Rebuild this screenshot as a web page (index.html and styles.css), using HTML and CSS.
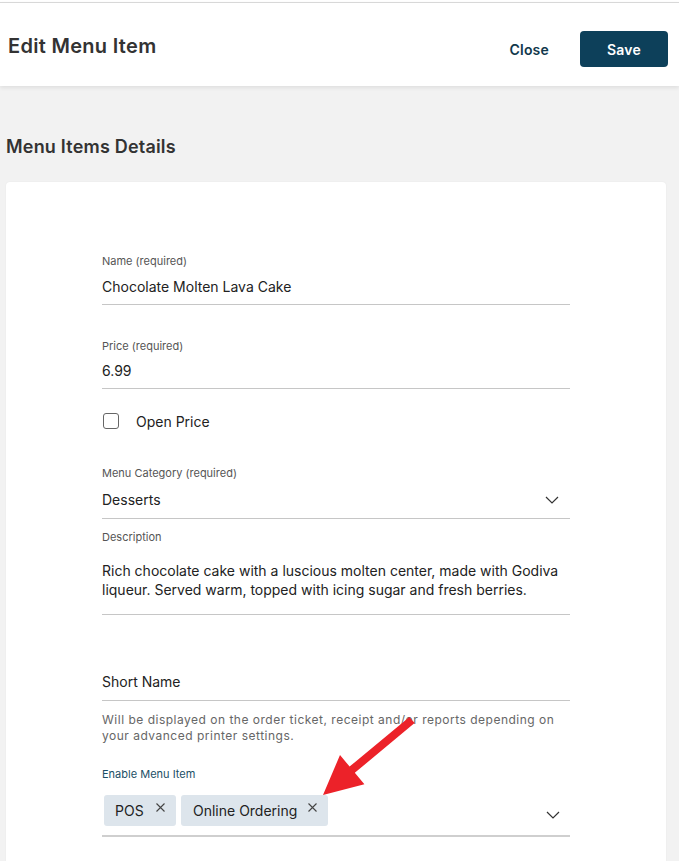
FILE: index.html
```html
<!DOCTYPE html>
<html lang="en">
<head>
<meta charset="utf-8">
<title>Edit Menu Item</title>
<link rel="stylesheet" href="styles.css">
</head>
<body>
<div class="page">
  <div class="topstrip"></div>
  <header class="header">
    <h1 class="title">Edit Menu Item</h1>
    <div class="actions">
      <button class="btn-close">Close</button>
      <button class="btn-save">Save</button>
    </div>
  </header>
  <main class="main">
    <h2 class="section-title">Menu Items Details</h2>
    <section class="card">
      <div class="form">
        <div class="field f-name">
          <div class="label">Name (required)</div>
          <div class="value">Chocolate Molten Lava Cake</div>
        </div>
        <div class="field f-price">
          <div class="label">Price (required)</div>
          <div class="value">6.99</div>
        </div>
        <label class="check-row">
          <span class="checkbox"></span>
          <span class="check-text">Open Price</span>
        </label>
        <div class="field f-category">
          <div class="label">Menu Category (required)</div>
          <div class="value select">
            <span>Desserts</span>
            <svg class="chev" width="14" height="8" viewBox="0 0 14 8"><path d="M1 1 L7 7 L13 1" fill="none" stroke="#333" stroke-width="1.2"/></svg>
          </div>
        </div>
        <div class="field f-desc">
          <div class="label">Description</div>
          <div class="value multi">Rich chocolate cake with a luscious molten center, made with Godiva liqueur. Served warm, topped with icing sugar and fresh berries.</div>
        </div>
        <div class="field f-short">
          <div class="value">Short Name</div>
        </div>
        <p class="helper">Will be displayed on the order ticket, receipt and/or reports depending on your advanced printer settings.</p>
        <div class="enable-label">Enable Menu Item</div>
        <div class="chips-field">
          <div class="chips">
            <span class="chip chip-pos">POS<svg class="x" width="9" height="9" viewBox="0 0 9 9"><path d="M0.5 0.5 L8.5 8.5 M8.5 0.5 L0.5 8.5" stroke="#444" stroke-width="1.1"/></svg></span>
            <span class="chip chip-oo">Online Ordering<svg class="x" width="9" height="9" viewBox="0 0 9 9"><path d="M0.5 0.5 L8.5 8.5 M8.5 0.5 L0.5 8.5" stroke="#444" stroke-width="1.1"/></svg></span>
          </div>
          <svg class="chev chev2" width="14" height="8" viewBox="0 0 14 8"><path d="M1 1 L7 7 L13 1" fill="none" stroke="#333" stroke-width="1.2"/></svg>
        </div>
      </div>
    </section>
  </main>
  <svg class="arrow" width="679" height="861" viewBox="0 0 679 861">
    <polygon points="323,795 340,755 349.6,766.6 409.4,716.9 414.6,723.1 354.8,772.8 364.4,784.3" fill="#ec2229"/>
  </svg>
</div>
</body>
</html>
```

FILE: styles.css
```css
html, body {
  margin: 0;
  padding: 0;
}
body {
  background: #f2f2f2;
  font-family: Inter, "Open Sans", "Liberation Sans", sans-serif;
  color: #222;
  overflow: hidden;
}
.page {
  position: relative;
  width: 679px;
  height: 861px;
  overflow: hidden;
}
.topstrip {
  height: 2px;
  background: #fff;
}
.header {
  height: 83px;
  background: #fff;
  border-top: 1px solid #d8d8d8;
  box-shadow: 0 2px 4px rgba(0,0,0,0.08);
  display: flex;
  align-items: flex-start;
  justify-content: space-between;
  padding: 0 11px 0 8px;
  position: relative;
  z-index: 1;
}
.title {
  margin: 32px 0 0;
  font-size: 20px;
  line-height: 22px;
  font-weight: 600;
  letter-spacing: 0.3px;
  color: #333;
}
.actions {
  display: flex;
  align-items: center;
  gap: 31px;
  margin-top: 28px;
}
.btn-close {
  background: none;
  border: 0;
  padding: 0;
  font-family: inherit;
  font-size: 14px;
  font-weight: 600;
  letter-spacing: 0.2px;
  color: #11384c;
}
.btn-save {
  width: 88px;
  height: 36px;
  background: #0d405a;
  border: 0;
  border-radius: 4px;
  color: #fff;
  font-family: inherit;
  font-size: 14px;
  font-weight: 600;
  letter-spacing: 0.2px;
}
.main {
  padding: 0 13px 0 6px;
}
.section-title {
  margin: 0;
  padding-top: 50px;
  height: 46px;
  font-size: 18px;
  font-weight: 600;
  letter-spacing: 0.2px;
  color: #333;
  line-height: 22px;
}
.card {
  margin-top: 0;
  background: #fff;
  border-radius: 4px;
  box-shadow: 0 0 2px rgba(0,0,0,0.06);
  height: 700px;
}
.form {
  width: 468px;
  padding: 72px 0 0 96px;
}
.field {
  border-bottom: 1px solid #c6c6c6;
}
.label {
  font-size: 11px;
  line-height: 14px;
  color: #555;
}
.value {
  font-size: 14px;
  line-height: 20px;
  color: #222;
}
.f-name .value { margin-top: 9px; padding-bottom: 7px; }
.f-price { margin-top: 34px; }
.f-price .value { margin-top: 8px; padding-bottom: 7px; }
.check-row {
  display: flex;
  align-items: center;
  gap: 17px;
  margin-top: 24px;
  height: 16px;
}
.checkbox {
  width: 14px;
  height: 14px;
  border: 1px solid #666;
  border-radius: 3px;
  margin-left: 1px;
}
.check-text {
  font-size: 14px;
  color: #222;
}
.f-category { margin-top: 37px; }
.f-category .value { margin-top: 10px; padding-bottom: 8px; }
.select {
  display: flex;
  align-items: center;
  justify-content: space-between;
  padding-right: 11px;
}
.chev { display: block; }
.f-desc { margin-top: 11px; }
.f-desc .value.multi {
  margin-top: 17px;
  line-height: 19px;
  padding-bottom: 15px;
}
.f-short { margin-top: 57px; }
.f-short .value { padding-bottom: 8px; }
.helper {
  margin: 11px 0 0;
  font-size: 12px;
  line-height: 16px;
  color: #666;
  letter-spacing: 0.5px;
}
.enable-label {
  margin-top: 23px;
  font-size: 11px;
  line-height: 14px;
  color: #1b4f66;
}
.chips-field {
  margin-top: 14px;
  padding: 0 10px 9px 2px;
  border-bottom: 2px solid #cfcfcf;
  display: flex;
  align-items: flex-end;
  justify-content: space-between;
}
.chips {
  display: flex;
  gap: 5px;
}
.chip {
  height: 31px;
  background: #dde5ec;
  border-radius: 3px;
  display: flex;
  align-items: center;
  font-size: 14px;
  color: #222;
  box-sizing: border-box;
}
.chip-pos { width: 72px; padding-left: 11px; }
.chip-pos .x { margin-left: 12px; margin-top: -6px; }
.chip-oo { width: 147px; padding-left: 12px; }
.chip-oo .x { margin-left: 11px; margin-top: -6px; }
.chev2 { margin-bottom: 7px; }
.arrow {
  position: absolute;
  left: 0;
  top: 0;
  pointer-events: none;
  z-index: 5;
}
```
